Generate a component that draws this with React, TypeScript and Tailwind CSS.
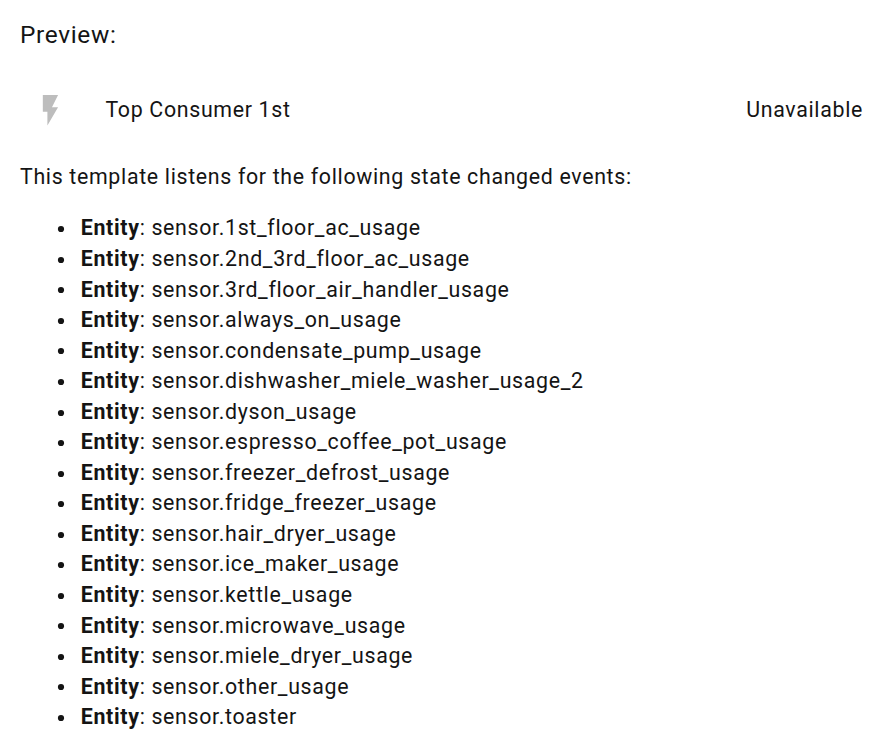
import React from 'react';

const entities = [
  'sensor.1st_floor_ac_usage',
  'sensor.2nd_3rd_floor_ac_usage',
  'sensor.3rd_floor_air_handler_usage',
  'sensor.always_on_usage',
  'sensor.condensate_pump_usage',
  'sensor.dishwasher_miele_washer_usage_2',
  'sensor.dyson_usage',
  'sensor.espresso_coffee_pot_usage',
  'sensor.freezer_defrost_usage',
  'sensor.fridge_freezer_usage',
  'sensor.hair_dryer_usage',
  'sensor.ice_maker_usage',
  'sensor.kettle_usage',
  'sensor.microwave_usage',
  'sensor.miele_dryer_usage',
  'sensor.other_usage',
  'sensor.toaster',
];

const FlashIcon = () => (
  <svg viewBox="0 0 24 24" className="size-[36.6px] fill-[#bdbdbd]">
    <path d="M7.1,2V13H10.1V22L17.1,10H13.1L17.1,2H7.1Z" />
  </svg>
);

const Bullet = () => (
  <svg viewBox="0 0 8 8" className="mr-4 mt-px size-2 fill-[#141414]">
    <circle cx="4" cy="4" r="3.1" />
  </svg>
);

const EntityRow = ({ name, state }: { name: string; state: string }) => (
  <div className="flex h-[61px] items-center">
    <div className="flex w-[61px] justify-center">
      <FlashIcon />
    </div>
    <div className="ml-[24.5px] flex-1">{name}</div>
    <div>{state}</div>
  </div>
);

const App = () => {
  return (
    <div className="h-[750px] overflow-hidden bg-white pl-5 pr-[25px] pt-[19.7px] font-[Roboto,sans-serif] text-[21.35px] leading-[30.55px] tracking-[0.67px] text-[#141414]">
      <h2 className="text-[24.4px] font-normal">Preview:</h2>
      <div className="mt-[29.6px]">
        <EntityRow name="Top Consumer 1st" state="Unavailable" />
      </div>
      <p className="mt-[21px]">This template listens for the following state changed events:</p>
      <ul className="mt-[21.1px] pl-[36.8px]">
        {entities.map((entity) => (
          <li key={entity} className="flex items-center">
            <Bullet />
            <span>
              <b className="font-bold">Entity</b>: {entity}
            </span>
          </li>
        ))}
      </ul>
    </div>
  );
};

export default App;
